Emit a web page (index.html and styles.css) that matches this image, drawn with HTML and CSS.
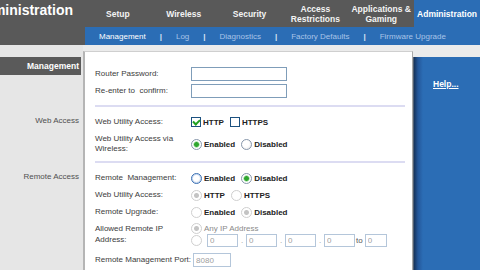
FILE: index.html
```html
<!DOCTYPE html>
<html lang="en">
<head>
    <meta charset="UTF-8">
    <meta name="viewport" content="width=device-width, initial-scale=1.0">
    <title>Administration</title>
    <link rel="stylesheet" href="styles.css">
</head>
<body>
    <div class="header">
        <div class="brand"><span class="pageName">Administration</span></div>
        <div class="nav">
            <div class="tabs">
                <div class="tab">Setup</div>
                <div class="tab">Wireless</div>
                <div class="tab">Security</div>
                <div class="tab">Access<br>Restrictions</div>
                <div class="tab">Applications &amp;<br>Gaming</div>
                <div class="tab active">Administration</div>
            </div>
            <div class="subTabs">
                <span class="subTab current">Management</span><span class="sep">|</span>
                <span class="subTab">Log</span><span class="sep">|</span>
                <span class="subTab">Diagnostics</span><span class="sep">|</span>
                <span class="subTab">Factory Defaults</span><span class="sep">|</span>
                <span class="subTab">Firmware Upgrade</span>
            </div>
        </div>
    </div>

    <div class="content">
        <div class="sideCol">
            <div class="sideSection first"><div class="sideBar">Management</div></div>
            <div class="sideSection"><div class="sideLabel">Web Access</div></div>
            <div class="sideSection"><div class="sideLabel">Remote Access</div></div>
        </div>

        <div class="mainCol">
            <div class="formSection first">
                <div class="row">
                    <div class="rowLabel">Router Password:</div>
                    <input type="password" class="textBox wide">
                </div>
                <div class="row">
                    <div class="rowLabel">Re-enter to &nbsp;confirm:</div>
                    <input type="password" class="textBox wide">
                </div>
            </div>

            <div class="formSection second">
                <div class="row">
                    <div class="rowLabel">Web Utility Access:</div>
                    <label class="option"><input type="checkbox" class="check" checked>HTTP</label>
                    <label class="option"><input type="checkbox" class="check">HTTPS</label>
                </div>
                <div class="row tall">
                    <div class="rowLabel">Web Utility Access via Wireless:</div>
                    <label class="option"><input type="radio" class="radio" name="wl" checked>Enabled</label>
                    <label class="option"><input type="radio" class="radio" name="wl">Disabled</label>
                </div>
            </div>

            <div class="formSection third">
                <div class="row">
                    <div class="rowLabel">Remote &nbsp;Management:</div>
                    <label class="option"><input type="radio" class="radio hover" name="rm">Enabled</label>
                    <label class="option"><input type="radio" class="radio" name="rm" checked>Disabled</label>
                </div>
                <div class="row">
                    <div class="rowLabel">Web Utility Access:</div>
                    <label class="option"><input type="radio" class="radio" name="rw" checked disabled>HTTP</label>
                    <label class="option"><input type="radio" class="radio" name="rw" disabled>HTTPS</label>
                </div>
                <div class="row">
                    <div class="rowLabel">Remote Upgrade:</div>
                    <label class="option"><input type="radio" class="radio" name="ru" disabled>Enabled</label>
                    <label class="option"><input type="radio" class="radio" name="ru" checked disabled>Disabled</label>
                </div>
                <div class="row ipRow">
                    <div class="rowLabel">Allowed Remote IP Address:</div>
                    <div class="ipFields">
                        <label class="option plain"><input type="radio" class="radio" name="ip" checked disabled>Any IP Address</label>
                        <div class="ipRange">
                            <input type="radio" class="radio" name="ip" disabled>
                            <input type="text" class="textBox ipBox" value="0" disabled><span class="dot">.</span>
                            <input type="text" class="textBox ipBox" value="0" disabled><span class="dot">.</span>
                            <input type="text" class="textBox ipBox" value="0" disabled><span class="dot">.</span>
                            <input type="text" class="textBox ipBox" value="0" disabled><span class="to">to</span>
                            <input type="text" class="textBox ipEnd" value="0" disabled>
                        </div>
                    </div>
                </div>
                <div class="row">
                    <div class="rowLabel noWrap">Remote Management Port:</div>
                    <input type="text" class="textBox port" value="8080" disabled>
                </div>
            </div>
        </div>

        <div class="helpCol">
            <a href="#" class="helpLink">Help...</a>
        </div>
    </div>
</body>
</html>
```

FILE: styles.css
```css
body{
    margin: 0;
    width: 480px;
    height: 270px;
    overflow: hidden;
    font-family: "Liberation Sans", Arial, sans-serif;
    font-size: 8px;
    color: #3c3c3c;
    background-color: #ebebeb;
}
.header{
    display: flex;
    height: 45px;
    background-color: #595959;
}
.brand{
    width: 85px;
    flex-shrink: 0;
    overflow: hidden;
    display: flex;
    justify-content: flex-end;
}
.pageName{
    font-size: 14px;
    font-weight: bold;
    line-height: 20px;
    color: white;
    padding-right: 12px;
    white-space: nowrap;
}
.nav{
    flex: 1;
    display: flex;
    flex-direction: column;
}
.tabs{
    height: 27px;
    display: flex;
}
.tab{
    flex: 1;
    display: flex;
    align-items: center;
    justify-content: center;
    text-align: center;
    color: #f4f4f4;
    font-size: 8.5px;
    font-weight: bold;
    line-height: 10px;
}
.tab.active{
    background-color: #2b6db5;
    color: white;
}
.subTabs{
    height: 18px;
    display: flex;
    align-items: center;
    background-color: #2b6db5;
}
.subTab{
    padding: 0 14px;
    color: #a9c4e8;
}
.subTab.current{
    color: white;
}
.sep{
    color: #d8e4f4;
    font-weight: bold;
}

.content{
    display: flex;
    height: 225px;
}
.sideCol{
    width: 83px;
    flex-shrink: 0;
    background-color: #e6e6e6;
}
.sideSection{
    height: 56px;
    box-sizing: border-box;
    padding-top: 9px;
}
.sideSection.first{
    height: 62px;
    padding-top: 12px;
}
.sideBar{
    height: 18px;
    line-height: 18px;
    margin-right: 2px;
    padding-right: 2px;
    text-align: right;
    background-color: #5a5a5a;
    color: white;
    font-weight: bold;
    font-size: 8.5px;
}
.sideLabel{
    line-height: 10px;
    text-align: right;
    padding-right: 4px;
    color: #505050;
}

.mainCol{
    width: 330px;
    flex-shrink: 0;
    box-sizing: border-box;
    margin-top: 6px;
    background-color: white;
    border-top: 1px solid #cfcfcf;
    border-left: 2px solid #b5b5b5;
    border-right: 1px solid #a8a8a8;
}
.formSection{
    margin: 0 7px 0 10px;
    display: flex;
    flex-direction: column;
    gap: 3px;
    border-bottom: 2px solid #dcdcf2;
}
.formSection.first{
    padding: 15px 0 7px;
}
.formSection.second{
    padding: 8px 0 7px;
    gap: 5px;
}
.formSection.third{
    padding: 8px 0 0;
    border-bottom: none;
}
.row{
    display: flex;
    align-items: center;
    min-height: 14px;
}
.rowLabel{
    width: 96px;
    flex-shrink: 0;
    line-height: 10px;
}
.rowLabel.noWrap{
    width: auto;
    white-space: nowrap;
    margin-right: 2px;
}
.ipRow{
    align-items: flex-start;
    margin-top: 1px;
    margin-bottom: 3px;
}
.ipRow .rowLabel{
    line-height: 11px;
}
.ipFields{
    display: flex;
    flex-direction: column;
}
.ipRange{
    display: flex;
    align-items: center;
    height: 13px;
}
.ipRange .radio{
    margin-right: 5px;
}
.dot{
    width: 8px;
    text-align: center;
    color: #999;
}
.to{
    margin: 0 2px 0 1px;
    color: #555;
}

.textBox{
    box-sizing: border-box;
    height: 14px;
    margin: 0;
    padding: 0 2px;
    border: 1px solid #7f9db9;
    background-color: white;
    font-family: "Liberation Sans", Arial, sans-serif;
    font-size: 8px;
    color: #999;
    outline: none;
}
.textBox:disabled{
    border-color: #b4c6da;
    background-color: white;
    color: #a0a0a0;
}
.wide{
    width: 96px;
}
.ipBox{
    width: 31px;
    height: 13px;
}
.ipEnd{
    width: 22px;
    height: 13px;
}
.port{
    width: 38px;
}

.option{
    display: inline-flex;
    align-items: center;
    gap: 2px;
    margin-right: 6px;
    font-weight: bold;
    color: #222;
    line-height: 11px;
}
.option.plain{
    font-weight: normal;
    color: #8a8a8a;
}
.check{
    appearance: none;
    position: relative;
    width: 10px;
    height: 10px;
    margin: 0;
    border: 1px solid #1c5180;
    background-color: white;
}
.check:checked::after{
    content: "";
    position: absolute;
    left: 2px;
    top: 0;
    width: 3px;
    height: 5px;
    border: solid #21a121;
    border-width: 0 2px 2px 0;
    transform: rotate(45deg);
}
.radio{
    appearance: none;
    width: 11px;
    height: 11px;
    margin: 0;
    border: 1px solid #8797ab;
    border-radius: 50%;
    background: radial-gradient(circle at 40% 40%, white 40%, #e4e4e4);
}
.radio:checked{
    background: radial-gradient(circle, #2fa52f 0 2px, #7fcf7f 2.5px, white 3.5px);
}
.radio.hover{
    border-color: #3a6fb2;
    box-shadow: inset 0 0 0 1px #c6d8f2;
}
.radio:disabled{
    border-color: #cfcfcf;
    background: white;
}
.radio:disabled:checked{
    background: radial-gradient(circle, #c4c4c4 0 2px, white 3px);
}

.helpCol{
    flex: 1;
    margin-top: 12px;
    padding: 22px 0 0 20px;
    background: linear-gradient(to right, #8a8a8a 0, #16335a 1px, #24579a 5px, #2b6db5 10px);
}
.helpLink{
    color: white;
    font-weight: bold;
    font-size: 8.5px;
    line-height: 10px;
}
```
